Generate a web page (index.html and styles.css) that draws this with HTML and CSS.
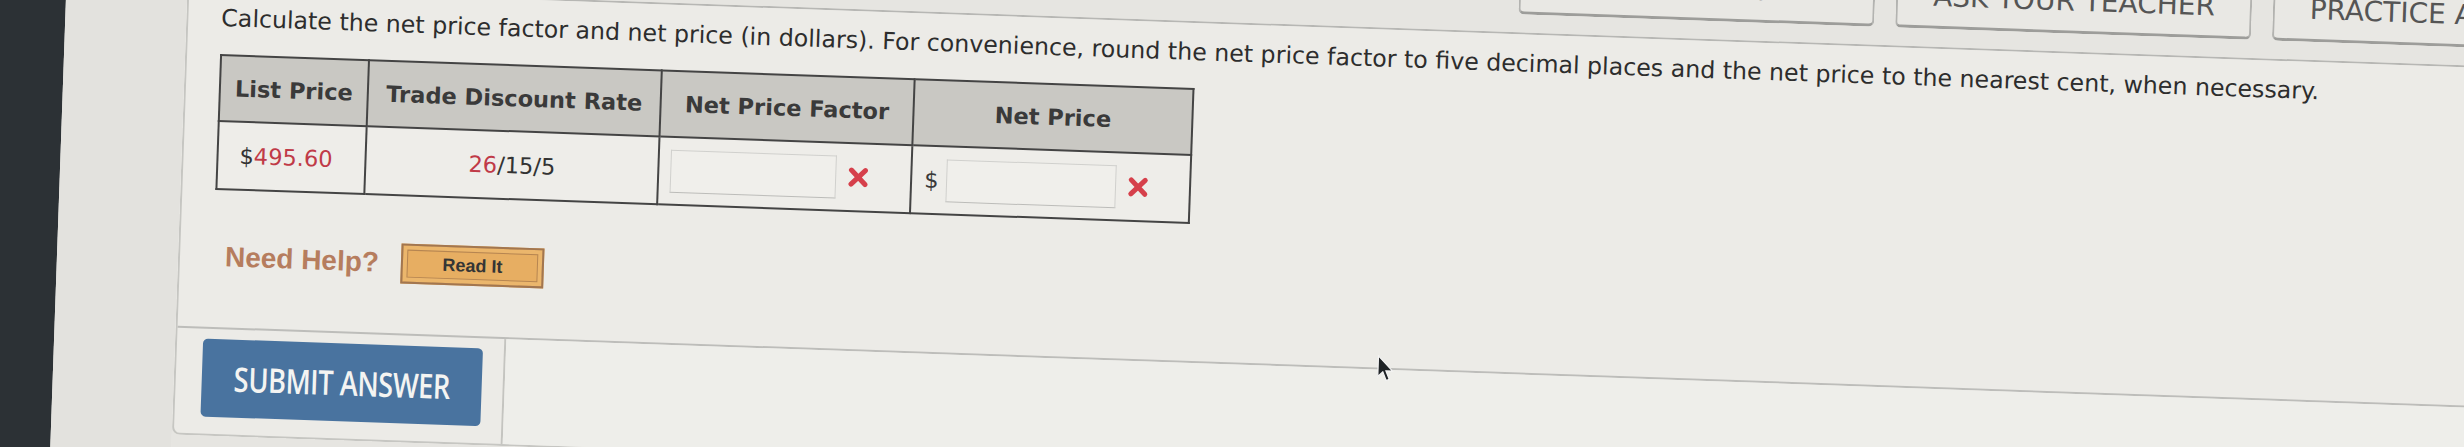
FILE: index.html
```html
<!DOCTYPE html>
<html lang="en">
<head>
<meta charset="utf-8">
<title>Net price factor</title>
<link rel="stylesheet" href="styles.css">
</head>
<body>
<div class="screen">
  <div class="bezel"></div>
  <div class="gutter"></div>
  <div class="content">
    <div class="topbar">
      <div class="tabs">
        <div class="tab">MY NOTES</div>
        <div class="tab">ASK YOUR TEACHER</div>
        <div class="tab">PRACTICE ANOTHER</div>
      </div>
    </div>
    <div class="card">
      <p class="question">Calculate the net price factor and net price (in dollars). For convenience, round the net price factor to five decimal places and the net price to the nearest cent, when necessary.</p>
      <table class="grid">
        <colgroup>
          <col class="w1"><col class="w2"><col class="w3"><col class="w4">
        </colgroup>
        <thead>
          <tr>
            <th class="c1">List Price</th>
            <th>Trade Discount Rate</th>
            <th>Net Price Factor</th>
            <th>Net Price</th>
          </tr>
        </thead>
        <tbody>
          <tr>
            <td class="c1">$<span class="var">495.60</span></td>
            <td><span class="var">26</span>/15/5</td>
            <td>
              <div class="answer">
                <span class="field"></span>
                <svg class="wrong" viewBox="0 0 22 20" width="22" height="20"><path d="M4 3 L18 17 M18 3 L4 17"/></svg>
              </div>
            </td>
            <td>
              <div class="answer money">
                <span class="dollar">$</span>
                <span class="field"></span>
                <svg class="wrong" viewBox="0 0 22 20" width="22" height="20"><path d="M4 3 L18 17 M18 3 L4 17"/></svg>
              </div>
            </td>
          </tr>
        </tbody>
      </table>
      <div class="help">
        <span class="help-label">Need Help?</span>
        <span class="read-it">Read It</span>
      </div>
      <div class="submit-row">
        <div class="submit-cell"><span class="submit"><span class="submit-label">SUBMIT ANSWER</span></span></div>
        <div class="notes-cell">
          <svg class="cursor" viewBox="0 0 14 22" width="17" height="27"><path d="M1 1 L1 18 L5 14 L8 21 L10.5 20 L7.5 13 L13 13 Z"/></svg>
        </div>
      </div>
    </div>
  </div>
</div>
</body>
</html>
```
FILE: styles.css
```css
html, body {
  margin: 0;
  padding: 0;
  width: 2464px;
  height: 447px;
  overflow: hidden;
  background: #e4e3df;
}

.screen {
  display: flex;
  width: 2800px;
  height: 780px;
  margin: -120px 0 0 -100px;
  transform: rotate(2deg);
  transform-origin: 322px 120px;
  background: #ebeae6;
}

.bezel {
  width: 166px;
  flex: none;
  background: #2c3135;
}

.gutter {
  width: 121px;
  flex: none;
  background: #e3e2de;
}

.content {
  flex: 1;
  display: flex;
  flex-direction: column;
  background: #e6e5e1;
}

.topbar {
  height: 107px;
  box-sizing: border-box;
  padding-top: 25px;
}

.tabs {
  display: flex;
  gap: 21px;
  padding-left: 1331px;
}

.tab {
  width: 356px;
  height: 64px;
  box-sizing: border-box;
  display: flex;
  align-items: center;
  justify-content: center;
  background: #e9e8e4;
  border: 2px solid #b3b3b0;
  border-bottom: 3px solid #9d9d9a;
  border-radius: 6px;
  font-family: "DejaVu Sans", Verdana, sans-serif;
  font-size: 28px;
  color: #555555;
  white-space: nowrap;
}

.card {
  width: 2500px;
  height: 449px;
  box-sizing: border-box;
  background: #ecebe7;
  border-top: 2px solid #b7b7b4;
  border-left: 2px solid #c6c6c2;
  border-bottom: 2px solid #c6c6c2;
  border-bottom-left-radius: 8px;
  padding: 14px 0 0 33px;
  display: flex;
  flex-direction: column;
  align-items: flex-start;
}

.question {
  margin: 0 0 21px;
  font-family: "DejaVu Sans", Verdana, sans-serif;
  font-size: 23.7px;
  line-height: 30px;
  color: #2d2d2d;
  white-space: nowrap;
}

.grid {
  table-layout: fixed;
  width: 973px;
  border-collapse: collapse;
  border: 2px solid #444444;
  font-family: "DejaVu Sans", Verdana, sans-serif;
  font-size: 22.5px;
  color: #333333;
}

.w1 { width: 148px; }
.w2 { width: 293px; }
.w3 { width: 253px; }
.w4 { width: 279px; }

.grid th,
.grid td {
  border: 2px solid #444444;
  padding: 0;
  white-space: nowrap;
}

.grid th {
  height: 64px;
  background: #c9c8c3;
  font-weight: bold;
  color: #3a3a3a;
  text-align: center;
}

.grid td {
  height: 66px;
  background: #eeede9;
  text-align: center;
}

.grid th.c1 { text-align: left; padding-left: 14px; }
.grid td.c1 { text-align: left; padding-left: 21px; }

.var { color: #c03a47; }

.answer {
  display: flex;
  align-items: center;
  gap: 11px;
  padding-left: 11px;
}

.answer.money {
  gap: 8px;
  padding-left: 12px;
}

.answer.money .wrong { margin-left: 3px; }

.dollar { color: #3a3a3a; }

.field {
  display: block;
  width: 166px;
  height: 43px;
  box-sizing: border-box;
  background: #f0efeb;
  border: 1px solid #d0d0cd;
  border-bottom-color: #bcbcb9;
}

.money .field { width: 170px; }

.wrong {
  flex: none;
  fill: none;
  stroke: #d6404b;
  stroke-width: 5;
  stroke-linecap: round;
}

.help {
  display: flex;
  align-items: center;
  height: 40px;
  margin: 47px 0 0 12px;
}

.help-label {
  font-family: "Liberation Sans", Arial, sans-serif;
  font-weight: bold;
  font-size: 28px;
  color: #b67d5e;
}

.read-it {
  margin-left: 22px;
  width: 143px;
  height: 40px;
  box-sizing: border-box;
  display: flex;
  align-items: center;
  justify-content: center;
  background: #e7ae62;
  border: 2px solid #a27650;
  box-shadow: inset 0 0 0 4px #ebb66c, inset 0 0 0 5px #b68551;
  font-family: "Liberation Sans", Arial, sans-serif;
  font-weight: bold;
  font-size: 18px;
  color: #353535;
}

.submit-row {
  display: flex;
  align-self: stretch;
  flex: 1;
  margin: 50px 0 0 -33px;
  border-top: 2px solid #bdbdba;
}

.submit-cell {
  width: 329px;
  flex: none;
  box-sizing: border-box;
  padding: 10px 0 0 26px;
  border-right: 2px solid #c4c4c0;
}

.submit {
  display: flex;
  align-items: center;
  justify-content: center;
  width: 280px;
  height: 78px;
  border-radius: 5px;
  background: #49739f;
  color: #f4f4f2;
  font-family: "Open Sans", sans-serif;
  font-weight: 600;
  font-size: 34px;
  letter-spacing: -0.5px;
}

.submit-label {
  display: inline-block;
  transform: scaleX(0.8);
  white-space: nowrap;
}

.notes-cell {
  flex: 1;
  position: relative;
  background: #eeeeea;
}

.cursor {
  position: absolute;
  top: -15px;
  left: 871px;
  fill: #1f2326;
  stroke: #f4f4f4;
  stroke-width: 1;
}
```
